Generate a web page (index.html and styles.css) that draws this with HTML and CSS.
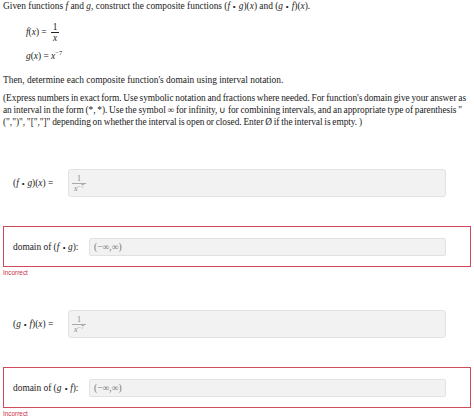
FILE: index.html
```html
<!DOCTYPE html>
<html lang="en">
<head>
  <meta charset="UTF-8">
  <title>Composite Functions</title>
  <link rel="stylesheet" href="styles.css">
</head>
<body>

  <div class="question">
    <p class="intro">Given functions <i>f</i> and <i>g</i>, construct the composite functions (<i>f</i> <span class="op">&#8728;</span> <i>g</i>)(<i>x</i>) and (<i>g</i> <span class="op">&#8728;</span> <i>f</i>)(<i>x</i>).</p>

    <div class="defs">
      <div class="def">
        <span><i>f</i>(<i>x</i>) =</span>
        <span class="frac"><span class="num">1</span><span class="den"><i>x</i></span></span>
      </div>
      <div class="def">
        <span><i>g</i>(<i>x</i>) = <i>x</i><sup>&minus;7</sup></span>
      </div>
    </div>

    <p class="then">Then, determine each composite function's domain using interval notation.</p>

    <p class="note">(Express numbers in exact form. Use symbolic notation and fractions where needed. For function's domain give your answer as<br>an interval in the form (*, *). Use the symbol &infin; for infinity, &cup; for combining intervals, and an appropriate type of parenthesis "<br>(",")", "[","]" depending on whether the interval is open or closed. Enter &Oslash; if the interval is empty. )</p>

    <div class="answer-row first">
      <span class="label">(<i>f</i> <span class="op">&#8728;</span> <i>g</i>)(<i>x</i>) =</span>
      <div class="answer-box">
        <span class="frac small"><span class="num">1</span><span class="den"><i>x</i><sup>&minus;7</sup></span></span>
      </div>
    </div>

    <div class="domain-wrap">
      <div class="domain">
        <span class="label">domain of (<i>f</i> <span class="op">&#8728;</span> <i>g</i>):</span>
        <div class="domain-box">(&minus;&infin;,&infin;)</div>
      </div>
      <div class="status">Incorrect</div>
    </div>

    <div class="answer-row">
      <span class="label">(<i>g</i> <span class="op">&#8728;</span> <i>f</i>)(<i>x</i>) =</span>
      <div class="answer-box">
        <span class="frac small"><span class="num">1</span><span class="den"><i>x</i><sup>&minus;7</sup></span></span>
      </div>
    </div>

    <div class="domain-wrap">
      <div class="domain">
        <span class="label">domain of (<i>g</i> <span class="op">&#8728;</span> <i>f</i>):</span>
        <div class="domain-box">(&minus;&infin;,&infin;)</div>
      </div>
      <div class="status">Incorrect</div>
    </div>
  </div>

</body>
</html>
```

FILE: styles.css
```css
body {
  margin: 0;
  padding: 0;
  background-color: #ffffff;
  font-family: "Liberation Serif", "Times New Roman", serif;
  font-size: 9.4px;
  color: #222;
}
.question {
  padding: 0 3px;
}
p {
  margin: 0;
}
.op {
  font-size: 7px;
}
.intro {
  line-height: 12px;
}
.defs {
  padding-left: 23px;
  margin-top: 8px;
}
.def {
  display: flex;
  align-items: center;
  gap: 4px;
  height: 22px;
  line-height: 12px;
}
.def + .def {
  margin-top: 2px;
}
sup {
  font-size: 6.5px;
  vertical-align: 4px;
  line-height: 0;
}
.frac {
  display: inline-flex;
  flex-direction: column;
  align-items: center;
  line-height: 10px;
}
.frac .num {
  border-bottom: 1px solid #222;
  padding: 0 2px;
}
.frac .den {
  white-space: nowrap;
}
.then {
  margin-top: 7px;
  line-height: 12px;
}
.note {
  margin-top: 6px;
  line-height: 12px;
  letter-spacing: -0.05px;
  word-spacing: -0.5px;
  white-space: nowrap;
}
.answer-row {
  display: flex;
  align-items: center;
  margin-top: 33px;
  padding-left: 10px;
  padding-right: 25px;
}
.answer-row.first {
  margin-top: 41px;
}
.label {
  white-space: nowrap;
}
.answer-row .label {
  width: 55px;
}
.answer-box {
  flex: 1;
  height: 26px;
  background-color: #f2f2f2;
  border: 1px solid #e2e2e2;
  border-radius: 3px;
  display: flex;
  align-items: center;
  padding-left: 3px;
}
.frac.small {
  font-size: 8px;
  color: #888;
  line-height: 9px;
}
.frac.small .num {
  border-bottom-color: #aaa;
  padding: 0 5px;
}
.frac.small sup {
  font-size: 6px;
  vertical-align: 3px;
}
.domain-wrap {
  margin-top: 29px;
}
.domain {
  display: flex;
  align-items: center;
  height: 39px;
  border: 1px solid #d04a5c;
  padding: 0 24px 0 9px;
}
.domain .label {
  width: 76px;
}
.domain-box {
  flex: 1;
  height: 16px;
  background-color: #f2f2f2;
  border: 1px solid #e2e2e2;
  border-radius: 2px;
  display: flex;
  align-items: center;
  padding-left: 4px;
  color: #777;
  font-size: 9.5px;
}
.status {
  color: #c9304a;
  font-family: "Liberation Sans", Arial, sans-serif;
  font-size: 6.4px;
  margin-top: 2px;
  line-height: 8px;
}
```
